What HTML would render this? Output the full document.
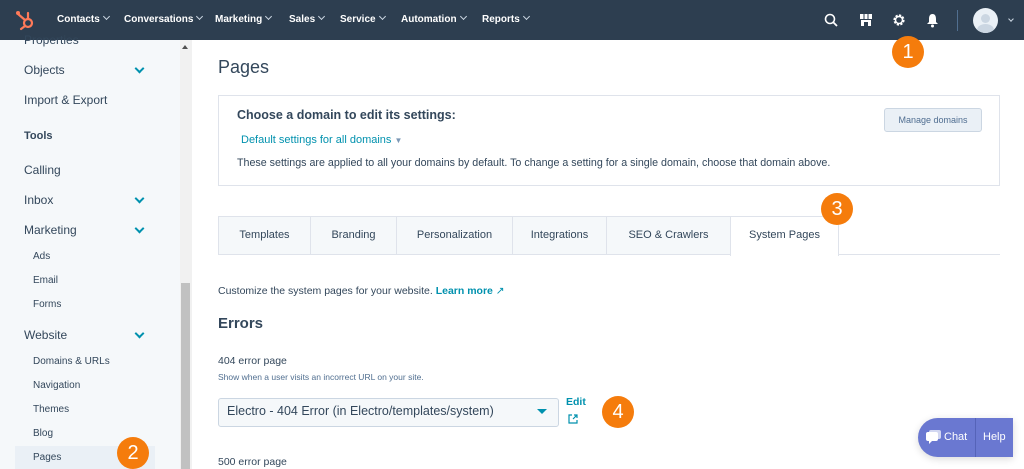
<!DOCTYPE html>
<html><head><meta charset="utf-8"><style>
*{margin:0;padding:0;box-sizing:border-box}
body{width:1024px;height:469px;overflow:hidden;background:#fff;font-family:"Liberation Sans",sans-serif;color:#33475b;position:relative}
.a{position:absolute;white-space:nowrap}
.hdr{position:absolute;left:0;top:0;width:1024px;height:40px;background:#2d3e50}
.nav{color:#fff;font-size:10px;font-weight:bold;top:14px}
.nav:after{content:"";display:inline-block;width:4px;height:4px;border-right:1px solid #cbd6e2;border-bottom:1px solid #cbd6e2;transform:rotate(45deg);margin-left:4px;position:relative;top:-3px}
.side{position:absolute;left:0;top:40px;width:180px;height:429px;background:#f5f8fa}
.si{font-size:12px;color:#33475b;left:24px}
.ss{font-size:10px;color:#33475b;left:33px}
.chev{position:absolute;left:136px;width:7px;height:7px;border-right:2px solid #0091ae;border-bottom:2px solid #0091ae;transform:rotate(45deg)}
.badge{position:absolute;width:32px;height:32px;border-radius:50%;background:#f57c0c;color:#fff;font-size:20px;text-align:center;line-height:32px}
.tab{position:absolute;top:216px;height:39px;background:#f5f8fa;border:1px solid #dfe3eb;font-size:11px;text-align:center;line-height:37px;color:#33475b}
</style></head><body>
<div class="hdr"></div>
<svg class="a" style="left:14px;top:9px" width="22" height="22" viewBox="0 0 22 22"><g stroke="#ff7a59" stroke-width="2.2" fill="none" stroke-linecap="round"><circle cx="14" cy="14" r="4"/><line x1="14" y1="10" x2="14" y2="4"/><line x1="11" y1="11" x2="4" y2="5"/><line x1="11" y1="17" x2="7" y2="20"/></g><circle cx="4" cy="4" r="2" fill="#ff7a59"/></svg>
<div class="a nav" style="left:57px">Contacts</div>
<div class="a nav" style="left:124px">Conversations</div>
<div class="a nav" style="left:215px">Marketing</div>
<div class="a nav" style="left:289px">Sales</div>
<div class="a nav" style="left:340px">Service</div>
<div class="a nav" style="left:401px">Automation</div>
<div class="a nav" style="left:482px">Reports</div>
<svg class="a" style="left:824px;top:13px" width="14" height="14"><circle cx="6" cy="6" r="4.5" stroke="#fff" stroke-width="1.6" fill="none"/><line x1="9" y1="9" x2="13" y2="13" stroke="#fff" stroke-width="1.8"/></svg>
<svg class="a" style="left:859px;top:13px" width="14" height="14"><rect x="1" y="1" width="12" height="5" fill="#fff"/><rect x="2" y="7" width="10" height="6" fill="#fff"/><rect x="5" y="9" width="4" height="4" fill="#2d3e50"/><line x1="5" y1="1" x2="5" y2="6" stroke="#2d3e50"/><line x1="9" y1="1" x2="9" y2="6" stroke="#2d3e50"/></svg>
<svg class="a" style="left:892px;top:13px" width="14" height="14" viewBox="0 0 14 14"><circle cx="7" cy="7" r="4.5" stroke="#fff" stroke-width="2.2" fill="none" stroke-dasharray="2.2 1.3"/><circle cx="7" cy="7" r="3.5" stroke="#fff" stroke-width="1.5" fill="none"/></svg>
<svg class="a" style="left:926px;top:13px" width="13" height="15"><path d="M6.5 1C3.5 1 3 4 3 6v3L1 11h11l-2-2V6c0-2-.5-5-3.5-5z" fill="#fff"/><circle cx="6.5" cy="13" r="1.5" fill="#fff"/></svg>
<div class="a" style="left:957px;top:10px;width:1px;height:21px;background:#516f90"></div>
<div class="a" style="left:973px;top:8px;width:25px;height:25px;border-radius:50%;background:#eaf0f6;overflow:hidden"><div class="a" style="left:8px;top:6px;width:9px;height:9px;border-radius:50%;background:#cbd6e2"></div><div class="a" style="left:4px;top:16px;width:17px;height:12px;border-radius:50%;background:#cbd6e2"></div></div>
<div class="a" style="left:1009px;top:17px;width:4px;height:4px;border-right:1px solid #cbd6e2;border-bottom:1px solid #cbd6e2;transform:rotate(45deg)"></div>

<div class="side"></div>
<div class="a" style="left:180px;top:40px;width:12px;height:429px;background:#f1f1f1"></div>
<div class="a" style="left:181px;top:283px;width:9px;height:186px;background:#c1c1c1"></div>
<div class="a" style="left:182px;top:45px;width:0;height:0;border-left:3px solid transparent;border-right:3px solid transparent;border-bottom:4px solid #505050"></div>
<div class="a si" style="top:33px">Properties</div>
<div class="a si" style="top:63px">Objects</div><div class="chev" style="top:65px"></div>
<div class="a si" style="top:93px">Import &amp; Export</div>
<div class="a si" style="top:130px;font-size:11px;font-weight:bold">Tools</div>
<div class="a si" style="top:163px">Calling</div>
<div class="a si" style="top:193px">Inbox</div><div class="chev" style="top:195px"></div>
<div class="a si" style="top:223px">Marketing</div><div class="chev" style="top:225px"></div>
<div class="a ss" style="top:251px">Ads</div>
<div class="a ss" style="top:275px">Email</div>
<div class="a ss" style="top:299px">Forms</div>
<div class="a si" style="top:328px">Website</div><div class="chev" style="top:330px"></div>
<div class="a ss" style="top:356px">Domains &amp; URLs</div>
<div class="a ss" style="top:380px">Navigation</div>
<div class="a ss" style="top:404px">Themes</div>
<div class="a ss" style="top:428px">Blog</div>
<div class="a" style="left:15px;top:446px;width:140px;height:23px;background:#eaf0f6"></div>
<div class="a ss" style="top:452px">Pages</div>
<div class="badge" style="left:117px;top:437px">2</div>

<div class="a" style="left:218px;top:57px;font-size:18px">Pages</div>
<div class="a" style="left:218px;top:95px;width:782px;height:91px;border:1px solid #dfe3eb"></div>
<div class="a" style="left:237px;top:108px;font-size:12.5px;font-weight:bold">Choose a domain to edit its settings:</div>
<div class="a" style="left:241px;top:134px;font-size:11px;color:#0091ae">Default settings for all domains <span style="font-size:8px;color:#7c98b6">▼</span></div>
<div class="a" style="left:237px;top:157px;font-size:10.7px">These settings are applied to all your domains by default. To change a setting for a single domain, choose that domain above.</div>
<div class="a" style="left:884px;top:108px;width:98px;height:24px;background:#eaf0f6;border:1px solid #cbd6e2;border-radius:3px;font-size:9px;color:#506e91;text-align:center;line-height:22px">Manage domains</div>

<div class="a" style="left:218px;top:254px;width:782px;height:1px;background:#dfe3eb"></div>
<div class="tab" style="left:218px;width:93px">Templates</div>
<div class="tab" style="left:310px;width:87px">Branding</div>
<div class="tab" style="left:396px;width:117px">Personalization</div>
<div class="tab" style="left:512px;width:95px">Integrations</div>
<div class="tab" style="left:606px;width:125px">SEO &amp; Crawlers</div>
<div class="tab" style="left:730px;width:109px;background:#fff;border-bottom:none;height:40px">System Pages</div>
<div class="badge" style="left:821px;top:193px">3</div>
<div class="badge" style="left:892px;top:36px">1</div>

<div class="a" style="left:218px;top:285px;font-size:10.5px">Customize the system pages for your website. <span style="color:#0091ae;font-weight:bold">Learn more</span> <span style="color:#0091ae">↗</span></div>
<div class="a" style="left:218px;top:315px;font-size:15px;font-weight:bold;color:#33475b">Errors</div>
<div class="a" style="left:218px;top:355px;font-size:10.5px">404 error page</div>
<div class="a" style="left:218px;top:372px;font-size:8.5px;color:#516f90">Show when a user visits an incorrect URL on your site.</div>
<div class="a" style="left:218px;top:398px;width:341px;height:29px;background:#f5f8fa;border:1px solid #cbd6e2;border-radius:3px"></div>
<div class="a" style="left:227px;top:404px;font-size:12.5px">Electro - 404 Error (in Electro/templates/system)</div>
<div class="a" style="left:537px;top:409px;width:0;height:0;border-left:5px solid transparent;border-right:5px solid transparent;border-top:5px solid #0091ae"></div>
<div class="a" style="left:566px;top:396px;font-size:10.5px;color:#0091ae;font-weight:bold">Edit</div>
<svg class="a" style="left:568px;top:414px" width="10" height="10"><path d="M4 1H1v8h8V6" stroke="#0091ae" stroke-width="1.2" fill="none"/><path d="M5 5l4-4M6 1h3v3" stroke="#0091ae" stroke-width="1.2" fill="none"/></svg>
<div class="badge" style="left:602px;top:396px">4</div>
<div class="a" style="left:218px;top:456px;font-size:10.5px">500 error page</div>

<div class="a" style="left:918px;top:418px;width:95px;height:39px;background:#6a78d1;border-radius:20px 0 0 20px;box-shadow:0 2px 8px rgba(0,0,0,.15)"></div>
<div class="a" style="left:975px;top:418px;width:1px;height:39px;background:#5563b8"></div>
<svg class="a" style="left:926px;top:430px" width="16" height="15"><rect x="3" y="0" width="12" height="9" rx="2" fill="#fff" opacity=".7"/><rect x="0" y="2" width="12" height="9" rx="2" fill="#fff"/><path d="M3 11l0 3 3-3z" fill="#fff"/></svg>
<div class="a" style="left:944px;top:431px;font-size:11px;color:#fff">Chat</div>
<div class="a" style="left:983px;top:431px;font-size:11px;color:#fff">Help</div>
</body></html>
